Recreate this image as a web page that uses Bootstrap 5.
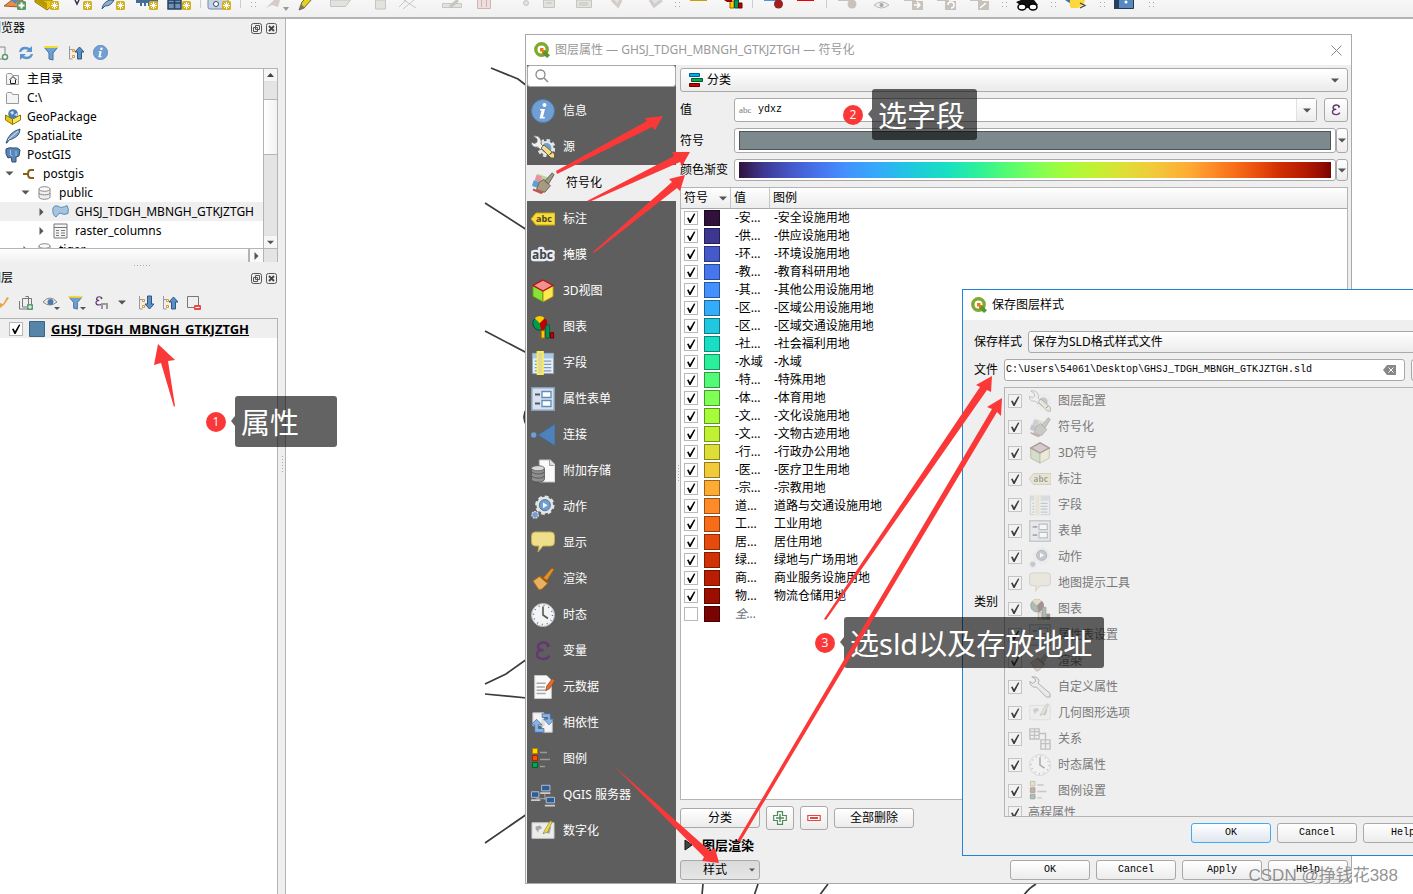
<!DOCTYPE html>
<html lang="zh-CN">
<head>
<meta charset="utf-8">
<meta name="viewport" content="width=device-width, initial-scale=1">
<title>QGIS</title>
<link href="https://cdn.jsdelivr.net/npm/bootstrap@5.3.0/dist/css/bootstrap.min.css" rel="stylesheet">
<script src="https://cdn.jsdelivr.net/npm/bootstrap@5.3.0/dist/js/bootstrap.bundle.min.js"></script>
<style>
  :root { --ui: #efefef; --edge: #a9a9a9; --red: #fb3838; --face: linear-gradient(#fff, #ececec); }
  body { font: 12px/18px "Noto Sans", "Noto Sans CJK SC", sans-serif; color: #000; background: #fff; }
  .mono { font: 10px/18px "Liberation Mono", "Noto Sans CJK SC", monospace; }
  svg { display: block; flex: none; }
  button, input, select { font: inherit; color: inherit; }

  /* application frame */
  .toolstrip { height: 19px; background: linear-gradient(#f7f7f7, #efefef); border-bottom: 2px solid #b4b4b4; }
  .dock { width: 286px; background: var(--ui); border-right: 1px solid #b4b4b4; }
  .dock-title { height: 18px; padding-right: 8px; }
  .dock-title span { margin-left: -11px; }
  .dock-tools { height: 31px; }
  .tool { border: 0; background: none; padding: 0; }
  .browser { height: 194px; margin-right: 7px; border: 1px solid #b4b4b4; border-left: 0; background: #fff; }
  .tree { list-style: none; margin: 0; padding: 0; height: 179px; }
  .tree li { height: 19px; display: flex; align-items: center; white-space: nowrap; padding-left: 5px; gap: 6px; }
  .tree .lv1 { padding-left: 5px; }
  .tree .lv2 { padding-left: 21px; }
  .tree .lv3 { padding-left: 37px; }
  .vbar { width: 14px; flex: none; border-left: 1px solid #b4b4b4; background: #e4e4e4; }
  .bar-btn { height: 13px; background: #f6f6f6; border: 0 solid #b4b4b4; }
  .vthumb { height: 56px; margin-top: 17px; background: linear-gradient(90deg, #fff, #f2f2f2); border: solid #b4b4b4; border-width: 1px 0; }
  .hbar { height: 14px; border-top: 1px solid #b4b4b4; }
  .hthumb { background: linear-gradient(#fff, #f0f0f0); border-right: 1px solid #b4b4b4; }
  .grip { height: 7px; color: #aaa; }
  .layers { margin-right: 7px; background: #fff; border: 1px solid #b4b4b4; border-left: 0; border-bottom: 0; }
  .layer-row { height: 19px; background: var(--ui); padding-left: 9px; }
  .layer-row a { color: #000; font-size: 13px; font-weight: 700; text-decoration: underline; text-underline-offset: 1px; margin-left: 6px; }

  /* check boxes */
  .tick { appearance: none; flex: none; width: 14px; height: 14px; margin: 0; background: #fff center/12px no-repeat; border: 1px solid #b8b8b8; }
  .tick:checked { background-image: url("data:image/svg+xml,%3Csvg xmlns='http://www.w3.org/2000/svg' viewBox='0 0 12 12'%3E%3Cpath d='M2 6 3.6 5.4 5 8.2 9 1.6 10.4 1.8 5.6 11H4.4z'/%3E%3C/svg%3E"); }

  /* windows */
  .win { position: absolute; background: var(--ui); display: flex; flex-direction: column; }
  .win-props { left: 525px; top: 34px; width: 827px; height: 850px; border: 1px solid var(--edge); }
  .win-save { left: 962px; top: 289px; width: 492px; height: 567px; border: 1px solid #1e86d8; }
  .win-bar { height: 30px; background: #fff; padding: 0 8px; gap: 5px; flex: none; }
  .face { background: var(--face); border: 1px solid var(--edge); border-radius: 3px; padding: 0; height: 20px; width: 80px; line-height: 18px; text-align: center; }
  .face.sq { width: 28px; height: 24px; }
  .face.go { border-color: #3fa9f5; background: linear-gradient(#fff, #dfe6ee); }
  .pull { appearance: none; background: var(--face); border: 1px solid var(--edge); border-radius: 3px; min-width: 0; outline: 0; }
  .field { background: #fff; border: 1px solid var(--edge); border-radius: 3px; min-width: 0; }
  .field input { border: 0; outline: 0; background: none; padding: 0; min-width: 0; }
  .side { width: 149px; background: #5e5e5e; color: #fff; margin-left: 1px; }
  .side .field { height: 22px; margin-bottom: 6px; padding-left: 6px; }
  .side a { height: 36px; display: flex; align-items: center; gap: 8px; padding-left: 4px; color: #fff; text-decoration: none; }
  .side a.on { background: var(--ui); color: #000; gap: 11px; }
  .side a, .kinds label { line-height: 20px; }
  .split { width: 4px; color: #aaa; }
  .pane { gap: 6px; padding: 3px 3px 3px 0; min-width: 0; }
  .lab { width: 54px; flex: none; }
  .h-combo { height: 24px; } .h-symbol { height: 25px; } .h-ramp { height: 22px; }
  .swatchbox { padding: 2px 4px; }
  .symbol { background: #7d8a8d; border: 1px solid #4c5558; }
  .ramp { background: linear-gradient(90deg, #30123b, #3e378f 4%, #4559cb 9%, #4777ef 14%, #4391fe 18%, #33adf9 24%, #1fc8de 29%, #18dfc3 35%, #2af09c 40%, #52fa75 45%, #7dff56 50%, #a4fc3b 55%, #c0f233 60%, #dedf36 65%, #f1ca3a 70%, #feab33 76%, #fe8b28 80%, #f66c19 84%, #e74b0c 88%, #d23105 91%, #b91e02 95%, #9b0f01 98%, #7a0403); }
  .classes { background: #fff; border: 1px solid #b4b4b4; min-height: 0; overflow: hidden; }
  .classes table { table-layout: fixed; width: 100%; border-collapse: separate; border-spacing: 0; }
  .classes th { height: 21px; padding: 0 3px; font-weight: 400; background: var(--face); border-bottom: 1px solid var(--edge); border-right: 1px solid #c4c4c4; }
  .classes th:last-child { border-right: 0; }
  .classes td { height: 18px; padding: 0 4px; line-height: 18px; white-space: nowrap; overflow: hidden; }
  .classes td:first-child { padding-left: 3px; }
  .chip { width: 16px; height: 16px; border: 1px solid #0006; }
  .kinds { border: 1px solid #b4b4b4; border-right: 0; height: 430px; overflow: hidden; color: #787878; }
  .kinds label { height: 26px; display: flex; align-items: center; padding-left: 3px; gap: 7px; }
  .kinds label.bare { height: 18px; gap: 6px; }
  .kinds .tick { background-color: #f4f4f4; opacity: .75; }
  .kinds svg { filter: grayscale(.75); opacity: .45; }

  /* annotations lying over the windows */
  .over { position: absolute; left: 0; top: 0; pointer-events: none; overflow: visible; }
  .note { position: absolute; display: flex; align-items: center; height: 51px; gap: 9px; white-space: nowrap; }
  .note b { width: 20px; height: 20px; border-radius: 50%; background: var(--red); color: #fff; font: 12px/20px "Open Sans", sans-serif; text-align: center; }
  .note span { position: relative; height: 51px; padding: 0 12px 0 6px; border-radius: 3px; background: #0000009c; color: #fff; font: 29px/54px "Noto Sans", "Noto Sans CJK SC", sans-serif; }
  .note span::before { content: ""; position: absolute; right: 100%; top: 20px; border: solid transparent; border-width: 5px 4px 5px 0; border-right-color: #0000009c; }
  .n1 { left: 206px; top: 396px; } .n1 span { padding-right: 38px; }
  .n2 { left: 843px; top: 89px; }
  .n3 { left: 815px; top: 617px; }
  .mark-csdn { position: absolute; right: 15px; bottom: 6px; font: 17px/24px "Liberation Sans", "Noto Sans CJK SC", sans-serif; color: #777c; text-shadow: 1px 1px #fff8; }
</style>
</head>
<body class="vh-100 overflow-hidden position-relative d-flex flex-column">

<svg width="0" height="0" class="position-absolute" aria-hidden="true">
  <symbol id="q" viewBox="0 0 16 16"><circle cx="7.500" cy="7.500" r="5.700" fill="none" stroke="#7cab2c" stroke-width="3.400"/><path d="M8 8l3 0 5 5.500-3 2.500-5-5z" fill="#589632"/><path d="M6 6h4l-1 1 2 2-2 2-2-2-1 1z" fill="#ee7913"/></symbol>
  <symbol id="caret" viewBox="0 0 8 5"><path d="M0 .5h8L4 4.500z" fill="#555"/></symbol>
  <symbol id="rt" viewBox="0 0 5 8"><path d="M.5 0v8L4.500 4z" fill="#555"/></symbol>
  <symbol id="info" viewBox="0 0 24 24"><circle cx="12" cy="12" r="11.500" fill="#6f9fd3" stroke="#4b7db5"/><circle cx="13.500" cy="6" r="2" fill="#fff"/><path d="M9 10h5l-2 8h2l-.5 1.500H8.500l2-8H9z" fill="#fff"/></symbol>
  <symbol id="source" viewBox="0 0 24 24"><circle cx="15.500" cy="13" r="7.800" fill="none" stroke="#e4e4e4" stroke-width="2.600" stroke-dasharray="3.500 2.600"/><circle cx="15.500" cy="13" r="6" fill="#6f9fd3" stroke="#e8e8e8" stroke-width="2.200"/><path d="M2 1q5-1 7 2t1 6l3 3-3 3-3.500-3Q2 13 .5 9V7l3 1.500L6 7V4z" fill="#f0f0f0" stroke="#666" stroke-width=".8"/><path d="M10 13l3-3 10.500 9v4h-3.500z" fill="#f3dc8a" stroke="#6b5a2a" stroke-width=".9"/><path d="M18.500 19.500l2.500-2" stroke="#222"/></symbol>
  <symbol id="style" viewBox="0 0 26 24"><path d="M7 2l12 4-4 14-13-4z" fill="#b7d7a0"/><path d="M6 3l6 2-2 6-6-2z" fill="#ef8fa0"/><path d="M3 9l6 2-2 6-6-2z" fill="#5aa0dc"/><path d="M9 11l5-3 7 7-6 7-9-3z" fill="#a89a80" stroke="#6c6455"/><path d="M15 10L23 1l2 2-6 10z" fill="#9c9a80" stroke="#5c5c50"/><path d="M2 18l12 4-3 2-9-4z" fill="#c84c4c"/></symbol>
  <symbol id="label" viewBox="0 0 24 24"><path d="M0 12l5-6h19v12H5z" fill="#f8dc3c" stroke="#c9a800"/><text x="5" y="15" font-family="Open Sans" font-weight="700" font-size="9" fill="#4a4220">abc</text></symbol>
  <symbol id="mask" viewBox="0 0 26 24"><text x="1" y="16" font-family="Open Sans" font-weight="700" font-size="13" fill="#444" stroke="#e8eef8" stroke-width="5" stroke-linejoin="round" paint-order="stroke">abc</text></symbol>
  <symbol id="cube" viewBox="0 0 24 26"><path d="M12 1L1 7v12l11 6z" fill="#8ae234" stroke="#4e8a10"/><path d="M12 1l11 6v12l-11 6z" fill="#fce94f" stroke="#a88a10"/><path d="M12 1L1 7l11 6 11-6z" fill="#f49090" stroke="#b01818" stroke-width="1.500"/></symbol>
  <symbol id="chart" viewBox="0 0 24 26"><circle cx="8.500" cy="9" r="7.500" fill="#009c4c" stroke="#044"/><path d="M8.500 9L3 3.500a7.500 7.500 0 0 1 11 0z" fill="#ffc800"/><path d="M8.500 9L14 3.500a7.500 7.500 0 0 1-4 13z" fill="#c00000"/><path d="M10 17h4v8h-4z" fill="#ffc800" stroke="#a06000"/><path d="M15 11h4v14h-4z" fill="#009c4c" stroke="#055"/><path d="M20 19h3.500v6H20z" fill="#c00000" stroke="#600"/></symbol>
  <symbol id="fields" viewBox="0 0 24 26"><path d="M.5 2.500h23v22H.5z" fill="#e8eef4" stroke="#88a0bc"/><path d="M1 3h22v5H1z" fill="#a8c8e8"/><path d="M3 11h18M3 14.500h18M3 18h18M3 21.500h18" stroke="#7a9cc0" stroke-width="1.500"/><path d="M6 1h6v24H6z" fill="#e0d8a0" stroke="#fcf050" stroke-width="1.800"/></symbol>
  <symbol id="form" viewBox="0 0 24 24"><path d="M.8.8h22.400v22.400H.8z" fill="#d8e2ee" stroke="#88a0bc" stroke-width="1.500"/><path d="M4 7.500h5M4 16.500h5" stroke="#556" stroke-width="2"/><path d="M11 4.500h9v6h-9zM11 13.500h9v6h-9z" fill="#fff" stroke="#5a8cc0" stroke-width="1.300"/></symbol>
  <symbol id="join" viewBox="0 0 24 24"><circle cx="2.700" cy="12" r="2.700" fill="#6f9fd3"/><path d="M24 1v22L7 12z" fill="#4f82ba" stroke="#38689c" stroke-width=".7"/></symbol>
  <symbol id="aux" viewBox="0 0 26 26"><path d="M9 1h12l5 5v19H9z" fill="#fafafa" stroke="#bbb"/><path d="M20 1v6h5" fill="#ddd" stroke="#999"/><path d="M.5 10v12c0 4 14 4 14 0V10z" fill="#909090" stroke="#555"/><path d="M1 14c2 3 12 3 13 0M1 18.500c2 3 12 3 13 0" fill="none" stroke="#555"/><ellipse cx="7.500" cy="10" rx="7" ry="2.800" fill="#d8d8d8" stroke="#666"/></symbol>
  <symbol id="action" viewBox="0 0 26 26"><circle cx="15" cy="11" r="9" fill="#e4e4e4" stroke="#e4e4e4" stroke-width="3" stroke-dasharray="4 3"/><circle cx="15" cy="11" r="6" fill="#6f9fd3" stroke="#476f9c"/><path d="M13 8v6l5-3z" fill="#fff"/><circle cx="4.500" cy="21.500" r="3.500" fill="#6f9fd3" stroke="#d8d8d8" stroke-width="1.500" stroke-dasharray="2 1"/></symbol>
  <symbol id="tip" viewBox="0 0 24 24"><path d="M4 1h16q3.500 0 3.500 4v6q0 4-3.500 4h-8l-5 6 1-6H4Q.5 15 .5 11V5Q.5 1 4 1z" fill="#efdf8c" stroke="#c0ac50"/></symbol>
  <symbol id="brush" viewBox="0 0 24 24"><path d="M12 11l9-10 2 1.500-7 11z" fill="#e0902c" stroke="#a05c10" stroke-width=".8"/><path d="M2 14l7-5 8 7-6 6-3 1z" fill="#e8b060" stroke="#a86c18"/><path d="M9 9l8 7" stroke="#a05c10" stroke-width="2"/></symbol>
  <symbol id="clock" viewBox="0 0 24 24"><circle cx="12" cy="12" r="11.500" fill="#f4f4f4" stroke="#b8b8b8"/><circle cx="12" cy="12" r="9.500" fill="none" stroke="#5078a8" stroke-width="1.500" stroke-dasharray="1 4"/><path d="M12 3.500V12l5 3.500" fill="none" stroke="#555" stroke-width="1.600"/></symbol>
  <symbol id="eps" viewBox="0 0 24 24"><path d="M17.500 7Q17 3.500 12.500 3.500T7 7.500q0 3.500 5.500 3.500-6.500 0-6.500 4.500t6.500 4.500q4.500 0 6-3.500" fill="none" stroke="#64386e" stroke-width="2.400"/><circle cx="17" cy="6.500" r="1.800" fill="#64386e"/></symbol>
  <symbol id="meta" viewBox="0 0 26 26"><path d="M4 .5h13l5 5v20H4z" fill="#fafafa" stroke="#ccc"/><path d="M6 9h10M6 13h9M6 16.500h10M6 20h10" stroke="#aaa" stroke-width="1.500"/><path d="M16 17l1-5 6-8 3 2-6 9z" fill="#e06c30" stroke="#8a3c10" stroke-width=".7"/></symbol>
  <symbol id="deps" viewBox="0 0 26 24"><path d="M2 1h12v14H2zM12 8h11v14H12z" fill="#f4f4f4" stroke="#c8c8c8"/><path d="M12 2h9v6h4l-5.500 6-5.500-6h4V6h-6z" fill="#8ab4e8" stroke="#38689c" stroke-width=".8"/><path d="M14 22H4v-8H0l6-6 6 6H8v4h6z" fill="#8ab4e8" stroke="#38689c" stroke-width=".8"/></symbol>
  <symbol id="legend" viewBox="0 0 24 24"><path d="M1.500 1.500h5v5h-5z" fill="#ffd800" stroke="#b88000"/><path d="M1.500 8.500h5v5h-5z" fill="#f85000" stroke="#a02800"/><path d="M1.500 15.500h5v5h-5z" fill="#00a850" stroke="#045c2c"/><path d="M9 5.500h7M9 12.500h10M9 19.500h5" stroke="#999" stroke-width="1.500"/></symbol>
  <symbol id="server" viewBox="0 0 26 26"><path d="M15 11v7M5 17h14" stroke="#aaa"/><g fill="#2c5c9c" stroke="#b8c4d0"><path d="M11.500 2.500h9v6h-9zM.5 9.500h8v6h-8zM16.500 15.500h9v6h-9z"/></g><path d="M10 11h11M0 18.500h10M15 24.500h11" stroke="#ccc" stroke-width="2"/></symbol>
  <symbol id="digit" viewBox="0 0 26 24"><path d="M1 3h24v17H1z" fill="#ececec" stroke="#c4c4c4"/><path d="M5 7l5-1 2 3-4 2 0 3-3-4zM16 10l6-3-2 8-4-1z" fill="#a8a8a8"/><path d="M13 15l2-4 6-10 2 1-5 11z" fill="#f0dc50" stroke="#8c7c20" stroke-width=".7"/></symbol>
  <symbol id="wrench" viewBox="0 0 24 24"><path d="M3 1q5-1 7 2t0 5l13 11v4h-4L8 12Q3 13 1 8V6l3 2 3-2V3z" fill="#e4e4e4" stroke="#555"/></symbol>
  <symbol id="rel" viewBox="0 0 24 24"><path d="M1 1h10v11H1zM13 13h10v10H13zM11 6h7v7M1 4h10M1 8h10M6 1v11M13 17h10M18 13v10" fill="none" stroke="#888" stroke-width="1.500"/></symbol>
  <symbol id="feather" viewBox="0 0 16 16"><path d="M1 15Q4 4 15 1q0 7-8 10l-3 1-2 3z" fill="#7ba2c8" stroke="#2c4c6c" stroke-width=".9"/><path d="M3 12L13 3" stroke="#dce8f4"/></symbol>
  <symbol id="db" viewBox="0 0 12 14"><path d="M.5 3v8c0 3 11 3 11 0V3" fill="#eee" stroke="#888"/><path d="M.5 7c0 2.500 11 2.500 11 0" fill="none" stroke="#888"/><ellipse cx="6" cy="3" rx="5.500" ry="2.300" fill="#fafafa" stroke="#888"/></symbol>
  <symbol id="funnel" viewBox="0 0 16 16"><path d="M1 2h14L10 8v7l-4-1V8z" fill="#6f9fd3" stroke="#476f9c"/><path d="M1 1h14v2H1z" fill="#f4dc30"/></symbol>
  <symbol id="up" viewBox="0 0 16 16"><path d="M1.500 1v13h3M1.500 4.500h3" fill="none" stroke="#999"/><path d="M4.500 4.500h2v2h-2zM4.500 10.500h2v2h-2z" fill="#fff" stroke="#e89020"/><path d="M9.500 14V7H7l4.500-5L16 7h-2.500v7z" fill="#5b8fc8" stroke="#2c5884"/></symbol>
  <symbol id="down" viewBox="0 0 16 16"><path d="M1.500 1v13h3M1.500 4.500h3" fill="none" stroke="#999"/><path d="M4.500 4.500h2v2h-2zM4.500 10.500h2v2h-2z" fill="#fff" stroke="#e89020"/><path d="M9.500 1v8H7l4.500 5L16 9h-2.500V1z" fill="#5b8fc8" stroke="#2c5884"/></symbol>
  <symbol id="float" viewBox="0 0 11 11"><rect x=".5" y=".5" width="10" height="10" rx="2" fill="none" stroke="#555"/><path d="M4.500 2.500h4v4h-4zM2.500 4.500h4v4h-4z" fill="none" stroke="#555"/></symbol>
  <symbol id="shut" viewBox="0 0 11 11"><rect x=".5" y=".5" width="10" height="10" rx="2" fill="none" stroke="#555"/><path d="M3 3l5 5M8 3L3 8" stroke="#444" stroke-width="1.800"/></symbol>
  <symbol id="star" viewBox="0 0 9 9"><rect width="9" height="9" rx="1.500" fill="#d4b020"/><path d="M4.500 1v7M1 4.500h7M2 2l5 5M7 2L2 7" stroke="#fff"/></symbol>
</svg>

<header class="toolstrip overflow-hidden flex-shrink-0">
  <svg width="1160" height="17" aria-hidden="true">
    <path d="M4 6l8-6h11l-3 7z" fill="#e89040" stroke="#a85820"/><path d="M10 0h8l-2 4z" fill="#5888c0"/><rect x="17" y="1" width="9" height="9" rx="1.500" fill="#5a9a6a"/><path d="M21.500 2.500v6M18.500 5.500h6" stroke="#fff" stroke-width="2"/>
    <path d="M35 2l12 8 5-4V0H35z" fill="#e8c810" stroke="#8c7400"/><path d="M35 1l12 8V3l-5-3z" fill="#b89800"/><use href="#star" x="50" y="1" width="9" height="9"/>
    <path d="M75 0l2 4 2-4" fill="#fff" stroke="#334" stroke-width="1.500"/><use href="#star" x="83" y="1" width="9" height="9"/>
    <path d="M102 9q1-7 8-9h4q-3 6-9 6z" fill="#8cb0d4" stroke="#38587c"/><use href="#star" x="116" y="1" width="9" height="9"/>
    <path d="M137 0h20v2h-20zM141 2v4m4-4v4m4-4v4" fill="#5b8fc8" stroke="#446c98" stroke-width="2"/><use href="#star" x="149" y="1" width="9" height="9"/>
    <path d="M168 0h13v9h-13zM174.500 0v9M168 3h13" fill="#6f93b8" stroke="#28405c" stroke-width="1.500"/><use href="#star" x="182" y="1" width="9" height="9"/>
    <path d="M200.500 0v8M240.500 0v8M752.500 0v8M826.500 0v8" stroke="#ccc"/>
    <path d="M208 0v7q0 2 2 2h18V0" fill="#c4d4e4" stroke="#6c8cac"/><circle cx="216" cy="4" r="2.500" fill="#fff" stroke="#446"/><use href="#star" x="222" y="1" width="9" height="9"/>
    <path d="M266 8l8-8h6l-2 7-6-2z" fill="#d4ccc8"/><path d="M283 7h6l-3 4z" fill="#999"/>
    <path d="M299 10l3-8 3-3h7l-8 9z" fill="#e8d020" stroke="#77692a"/><path d="M299 10l2-6 4 4z" fill="#777"/>
    <g fill="#e2e2de" stroke="#c6c6c0"><path d="M330.500 0v6.500h15l5-6.500zM375.500 0v9h10V0zM399 7l7-7M403 9l11-9M404 0l12 8M442.500 3.500h19v4h-19zM543.500 0v7.500h11V0zM576.500 0v7.500h15V0zM579 3h9M579 5h9M546 3h6"/><path d="M450 7l8-7" stroke-width="3"/><path d="M477.500 0v8.500h13V0M481.500 0v7m5-7v7" fill="#eedede" stroke="#d0b4b4"/><circle cx="526" cy="3" r="2.500"/><path d="M612 0l6 6 3-6M650 0l4 6 8-6" stroke="#d4ccc8" stroke-width="3"/></g>
    <path d="M690 0h17v1h-17z" fill="#c8a000"/><path d="M730 1h4v7h-4z" fill="#ffc800" stroke="#a06000"/><path d="M734.500 0h4v8h-4z" fill="#009c4c" stroke="#055"/><path d="M738.500 3h3.500v5h-3.500z" fill="#c00000" stroke="#600"/><path d="M724 0h8v2h-5z" fill="#900"/>
    <path d="M764 0h12v1h-12z" fill="#4c94f0"/><circle cx="778.500" cy="4" r="4.500" fill="#9c2020"/><path d="M797 0h17v1h-17z" fill="#f00000"/>
    <g fill="#c8c2bc"><path d="M838 0h12v1h-12zM904 0h12v1h-12zM937 0h12v1h-12zM970 0h12v1h-12z"/><circle cx="852" cy="4" r="4.500"/><rect x="912" y="1" width="11" height="9"/><rect x="945" y="1" width="11" height="9"/><rect x="978" y="1" width="11" height="9"/></g>
    <path d="M874 5q8-6 15 0-8 6-15 0z" fill="#eee" stroke="#bbb"/><circle cx="881.500" cy="5" r="2" fill="#aaa"/><path d="M914 5h6m-3-3 3 3-3 3M948 5a3 3 0 1 1 3 3M980 8l6-5" fill="none" stroke="#fff" stroke-width="1.500"/>
    <path d="M1016 2l5-2h13l4 5-6 3h-8z" fill="#111"/><ellipse cx="1022" cy="7" rx="4" ry="3" fill="#fff" stroke="#000" stroke-width="1.500"/><ellipse cx="1033" cy="7" rx="4" ry="3" fill="#fff" stroke="#000" stroke-width="1.500"/>
    <path d="M1065 0h6v4z" fill="#3c74a8"/><path d="M1070 0h15l-1 4-6 4h-7q-2-2-1-8z" fill="#fcd83c"/><path d="M1080 3l5 2.500-5 2.500" fill="none" stroke="#444" stroke-width="1.300"/>
    <path d="M1114.500 0v8.500h19V0" fill="#5888c0" stroke="#203850"/><path d="M1114 0h5v9h-5z" fill="#24405c"/><circle cx="1126" cy="2" r="1.500" fill="#fff"/>
    <path d="M251 2.500h6M251 6.500h6M675 2.500h6M675 6.500h6M1002 2.500h6M1002 6.500h6M1051 2.500h6M1051 6.500h6M1100 2.500h6M1100 6.500h6M1149 2.500h6M1149 6.500h6" fill="none" stroke="#aaa" stroke-dasharray="1 3"/>
  </svg>
</header>

<main class="d-flex flex-grow-1 overflow-hidden">
  <aside class="dock d-flex flex-column flex-shrink-0 overflow-hidden">
    <div class="dock-title d-flex align-items-center gap-1"><span class="me-auto">浏览器</span>
      <button class="tool" aria-label="浮动"><svg width="11" height="11"><use href="#float"/></svg></button><button class="tool" aria-label="关闭"><svg width="11" height="11"><use href="#shut"/></svg></button></div>
    <div class="dock-tools d-flex align-items-center gap-2">
      <svg width="9" height="16"><path d="M0 2h5v12H0" fill="none" stroke="#888"/><circle cx="5" cy="12" r="2.500" fill="#fff" stroke="#5a9a6a" stroke-width="1.500"/></svg>
      <svg width="18" height="16" viewBox="0 0 16 16"><path d="M1 7q1-6 8-5l3 1 2-2v6H8l2-2q-5-2-7 2zM15 9q-1 6-8 5l-3-1-2 2V9h6l-2 2q5 2 7-2z" fill="#5b93d0"/></svg>
      <svg width="16" height="16"><use href="#funnel"/></svg>
      <svg width="18" height="16"><use href="#up"/></svg>
      <svg width="15" height="15"><use href="#info"/></svg>
    </div>
    <div class="browser">
      <div class="d-flex">
        <ul class="tree flex-grow-1 overflow-hidden">
          <li><svg width="16" height="14"><path d="M1.500 12.500v-10l1-1h4l1 2h6v9z" fill="#f4f4f4" stroke="#999"/><path d="M4.500 8L8 4.500 11.500 8M5.500 8v3.500h5V8" fill="none" stroke="#222"/></svg>主目录</li>
          <li><svg width="16" height="14"><path d="M1.500 12.500v-10l1-1h4l1 2h6v9z" fill="#f4f4f4" stroke="#999"/></svg>C:\</li>
          <li><svg width="16" height="16"><path d="M.5 6l7 4v5.500L.5 11z" fill="#e8c810" stroke="#8c7400"/><path d="M15.500 6l-8 4v5.500l8-4.500z" fill="#fce850" stroke="#8c7400"/><circle cx="8" cy="5" r="4.800" fill="#4c7cac"/><path d="M5 3l3-1 1 2-2 2zM9 6l3-2v3z" fill="#cfe0f0"/></svg>GeoPackage</li>
          <li><svg width="16" height="16"><use href="#feather"/></svg>SpatiaLite</li>
          <li><svg width="16" height="16"><path d="M1 2q3-2 7-1 5-1 7 2l-1 6-3 1v5H7l-1-5-3 1Q0 7 1 2z" fill="#5b87b8" stroke="#2c4c74"/><path d="M5.500 3v5l2 1M11 4v5" stroke="#a8c4e0" fill="none"/></svg>PostGIS</li>
          <li class="lv1 gap-2"><svg width="9" height="5"><use href="#caret"/></svg><svg width="13" height="10"><path d="M1 5h5M12 1H9Q6 1 6 5t3 4h3" fill="none" stroke="#8c5c10" stroke-width="2"/></svg>postgis</li>
          <li class="lv2 gap-2"><svg width="9" height="5"><use href="#caret"/></svg><svg width="13" height="14"><use href="#db"/></svg>public</li>
          <li class="lv3" style="background:#efefef"><svg width="9" height="8"><use href="#rt"/></svg><svg width="17" height="13"><path d="M1 3q1-3 5-2 3 3 9-.5 2 3 1 8-4 2-8-.5-2 1-4 4Q0 10 1 3z" fill="#a4c4e0" stroke="#5c8cb8"/></svg>GHSJ_TDGH_MBNGH_GTKJZTGH</li>
          <li class="lv3"><svg width="9" height="8"><use href="#rt"/></svg><svg width="17" height="16"><path d="M2 1h13v14H2z" fill="#f4f4f4" stroke="#777"/><path d="M2 4.500h13M4 7.500h3m2 0h4M4 10h3m2 0h4M4 12.500h3m2 0h4" stroke="#777"/></svg>raster_columns</li>
          <li class="lv2 gap-2"><svg width="9" height="8"><use href="#rt"/></svg><svg width="13" height="14"><use href="#db"/></svg>tiger</li>
        </ul>
        <div class="vbar d-flex flex-column"><div class="bar-btn border-bottom d-flex align-items-center justify-content-center"><svg width="7" height="4"><path d="M0 4h7L3.500 0z" fill="#444"/></svg></div><div class="vthumb"></div><div class="bar-btn border-top mt-auto d-flex align-items-center justify-content-center"><svg width="7" height="5"><use href="#caret"/></svg></div></div>
      </div>
      <div class="hbar d-flex"><div class="hthumb flex-grow-1"></div><div class="vbar d-flex align-items-center justify-content-center bg-light"><svg width="5" height="8"><use href="#rt"/></svg></div><div class="vbar"></div></div>
    </div>
    <div class="grip d-flex justify-content-center align-items-center"><svg width="18" height="1"><path d="M0 .5h18" stroke="#aaa" stroke-dasharray="1 2"/></svg></div>
    <div class="dock-title d-flex align-items-center gap-1"><span class="me-auto">图层</span>
      <button class="tool" aria-label="浮动"><svg width="11" height="11"><use href="#float"/></svg></button><button class="tool" aria-label="关闭"><svg width="11" height="11"><use href="#shut"/></svg></button></div>
    <div class="dock-tools d-flex align-items-center gap-2">
      <svg width="10" height="16"><path d="M0 8l3 1 4-7 2 1-5 7-4 3z" fill="#e8a840"/></svg>
      <svg width="17" height="16"><path d="M1.500 6v8h9M4.500 3.500V12h9V3.500zM7.500 1.500h3v8" fill="none" stroke="#777"/><rect x="9" y="9" width="6" height="6" rx="1" fill="#5a9a6a"/><path d="M12 10v4m-2-2h4" stroke="#fff"/></svg>
      <svg width="17" height="16"><path d="M0 7q7-8 14 0-7 6-14 0z" fill="#eee" stroke="#888"/><circle cx="7.500" cy="7" r="3" fill="#4c7cac"/><path d="M11 12h6l-3 3z" fill="#555"/></svg>
      <svg width="18" height="16"><use href="#funnel" width="15" height="15"/><path d="M12 12h6l-3 3z" fill="#555"/></svg>
      <svg width="16" height="16"><use href="#eps" x="-1" y="0" width="12" height="12"/><path d="M8 14V9h5v5" fill="none" stroke="#999" stroke-width="2"/></svg>
      <svg class="me-1" width="8" height="5"><use href="#caret"/></svg>
      <svg width="16" height="16"><use href="#down"/></svg>
      <svg width="16" height="16"><use href="#up"/></svg>
      <svg width="16" height="16"><path d="M1.500 1.500h11v11h-11z" fill="none" stroke="#777"/><rect x="8" y="10" width="7" height="5" rx="1" fill="#e84848"/><path d="M9.500 12.500h4" stroke="#fff"/></svg>
    </div>
    <div class="layers flex-grow-1"><div class="layer-row d-flex align-items-center"><input class="tick" type="checkbox" checked aria-label="图层可见"><svg class="ms-1" width="18" height="16"><path d="M2.500.5h15v15h-15z" fill="#5585a8" stroke="#3c6484"/></svg><a href="#">GHSJ_TDGH_MBNGH_GTKJZTGH</a></div></div>
  </aside>
</main>

<!-- map linework under the windows -->
<svg class="over" width="1" height="1" aria-hidden="true"><g fill="none" stroke="#383c3c" stroke-width="1.700">
  <path d="M491 68l27 11 9 7M485 203l42 27M485 331l42 22M485 684l21-10 21-15M485 694l42 4M485 843l42-29M758 884l-4 12M828 884l-9 12M1036 884q-7 4-12 11M703 884l-1 11"/><path d="M527 408q-6 9 0 18" fill="#6f8080"/></g>
  <path d="M282.500 456v18" stroke="#aaa" stroke-dasharray="1 2"/></svg>

<section class="win win-props" aria-label="图层属性">
  <div class="win-bar d-flex align-items-center" style="color:#999"><svg width="16" height="16"><use href="#q"/></svg><span class="me-auto">图层属性 — GHSJ_TDGH_MBNGH_GTKJZTGH — 符号化</span><button class="tool" aria-label="关闭"><svg width="13" height="13"><path d="M1.500 1.500l10 10M11.500 1.500l-10 10" stroke="#888"/></svg></button></div>
  <div class="d-flex flex-grow-1">
    <nav class="side flex-shrink-0" id="side"><div class="field d-flex align-items-center"><svg width="16" height="16"><circle cx="6.500" cy="6.500" r="4.500" fill="none" stroke="#888" stroke-width="1.300"/><path d="M10 10l4 4" stroke="#888" stroke-width="1.500"/></svg><input class="w-100" type="search" aria-label="搜索"></div></nav>
    <div class="split d-flex align-items-center"><svg width="4" height="18"><path d="M2.500 0v18" stroke="#aaa" stroke-dasharray="1 2"/></svg></div>
    <div class="pane flex-grow-1 d-flex flex-column">
      <div class="pull h-combo d-flex align-items-center px-2"><svg width="14" height="16"><path d="M.5 1.500h10v3h-10z" fill="#00b0d0" stroke="#0454b0"/><path d="M2.500 6.500h11v3h-11z" fill="#00b058" stroke="#04542c"/><path d="M.5 11.500h10v3h-10z" fill="#c80000" stroke="#600"/></svg><select class="pull border-0 bg-transparent flex-grow-1 py-0 ps-1 pe-0" aria-label="渲染类型"><option>分类</option></select><svg width="8" height="5"><use href="#caret"/></svg></div>
      <div class="d-flex h-combo"><label class="lab align-self-center" for="val">值</label><div class="field flex-grow-1 d-flex align-items-center ps-1"><span style="font:9px/18px 'Liberation Serif',serif;color:#777;width:19px">abc</span><input id="val" class="mono flex-grow-1" value="ydxz"><span class="h-100 border-start d-flex align-items-center justify-content-center" style="width:20px;background:var(--face)"><svg width="8" height="5"><use href="#caret"/></svg></span></div><button class="face h-combo d-flex align-items-center justify-content-center" style="width:24px;margin-left:7px" aria-label="表达式"><svg width="14" height="14"><use href="#eps"/></svg></button></div>
      <div class="d-flex h-symbol"><span class="lab align-self-center">符号</span><button class="field swatchbox flex-grow-1" aria-label="符号"><span class="symbol d-block h-100"></span></button><button class="face h-100 d-flex align-items-center justify-content-center" style="width:12px" aria-label="符号菜单"><svg width="8" height="5"><use href="#caret"/></svg></button></div>
      <div class="d-flex h-ramp"><span class="lab align-self-center text-nowrap">颜色渐变</span><button class="field swatchbox flex-grow-1" aria-label="颜色渐变"><span class="ramp d-block h-100"></span></button><button class="face h-100 d-flex align-items-center justify-content-center" style="width:12px" aria-label="渐变菜单"><svg width="8" height="5"><use href="#caret"/></svg></button></div>
      <div class="classes flex-grow-1"><table><colgroup><col style="width:50px"><col style="width:39px"><col></colgroup><thead><tr><th><div class="d-flex align-items-center justify-content-between">符号<svg width="8" height="5"><use href="#caret"/></svg></div></th><th>值</th><th>图例</th></tr></thead><tbody id="classes"></tbody></table></div>
      <div class="d-flex align-items-center" style="gap:6px"><button class="face">分类</button><button class="face sq d-flex align-items-center justify-content-center" aria-label="添加"><svg width="14" height="14"><path d="M4.500.7h5v3.800h3.800v5H9.500v3.800h-5V9.500H.7v-5h3.800z" fill="#fff" stroke="#4c8c54" stroke-width="1.200"/><path d="M7 3v8M3 7h8" stroke="#4c8c54" stroke-width="1.400"/></svg></button><button class="face sq d-flex align-items-center justify-content-center" aria-label="移除"><svg width="14" height="14"><path d="M.8 4.500h12.400v5H.8z" fill="#fff" stroke="#e04848" stroke-width="1.200"/><path d="M3 7h8" stroke="#e04848" stroke-width="2"/></svg></button><button class="face">全部删除</button></div>
      <div class="d-flex align-items-center fw-bold ps-1" style="height:18px;gap:9px;font-size:13px"><svg width="9" height="12"><path d="M1 1v10l7-5z" fill="#444" stroke="#111"/></svg>图层渲染</div>
      <div class="d-flex" style="gap:6px"><button class="face me-auto d-flex align-items-center justify-content-end pe-1" style="gap:22px;background:linear-gradient(#dadada,#e6e6e6)">样式<svg width="6" height="4"><use href="#caret"/></svg></button><button class="face mono">OK</button><button class="face mono">Cancel</button><button class="face mono">Apply</button><button class="face mono">Help</button></div>
    </div>
  </div>
</section>

<div class="overflow-hidden position-absolute w-100 h-100 pe-none">
<section class="win win-save pe-auto" aria-label="保存图层样式">
  <div class="win-bar d-flex align-items-center"><svg width="16" height="16"><use href="#q"/></svg>保存图层样式</div>
  <div class="d-flex flex-column" style="padding:11px 10px 11px 11px;gap:6px">
    <div class="d-flex" style="height:22px"><label class="lab align-self-center" for="fmt">保存样式</label><select id="fmt" class="pull flex-grow-1 px-1"><option>保存为SLD格式样式文件</option></select></div>
    <div class="d-flex" style="height:22px"><label class="align-self-center" style="width:30px" for="file">文件</label><div class="field d-flex align-items-center flex-grow-1" style="padding-left:1px"><input id="file" class="mono flex-grow-1" value="C:\Users\54061\Desktop\GHSJ_TDGH_MBNGH_GTKJZTGH.sld"><svg width="13" height="10" class="me-2"><path d="M0 5l4-5h9v10H4z" fill="#888"/><path d="M5.500 2.500l5 5m0-5l-5 5" stroke="#fff"/></svg></div><button class="face h-100" style="width:32px;margin-left:6px">…</button></div>
    <div class="d-flex"><span class="align-self-center" style="width:30px">类别</span><div class="kinds flex-grow-1" id="kinds"></div></div>
    <div class="d-flex justify-content-end" style="gap:6px"><button class="face go mono">OK</button><button class="face mono">Cancel</button><button class="face mono">Help</button></div>
  </div>
</section>
</div>

<div class="note n1"><b>1</b><span>属性</span></div>
<div class="note n2"><b>2</b><span>选字段</span></div>
<div class="note n3"><b>3</b><span>选sld以及存放地址</span></div>
<svg class="over" width="1" height="1" aria-hidden="true"><g fill="#fb3838">
  <path d="M556 171L647 121 645 118 663 116 655 130 652 127 557 174z"/>
  <path d="M587 201L674 156 672 152 690 152 682 166 680 162 589 202z"/>
  <path d="M593 252L672 182 669 179 685 175 680 191 677 188 594 253z"/>
  <path d="M174 407L161 363 154 365 158 344 175 360 168 361 175 406z"/>
  <path d="M614 766L710 851 715 848 719 863 702 861 704 857z"/>
  <path d="M824 619L980 387 976 385 992 376 991 392 987 390 826 620z"/>
  <path d="M737 841L992 409 987 407 1002 398 1001 416 997 412 740 842z"/>
</g></svg>
<div class="mark-csdn">CSDN @挣钱花388</div>

<script>
  const icon = (id, s) => `<svg width="${s}" height="${s}"><use href="#${id}"/></svg>`;
  const pages = [['info','信息'],['source','源'],['style','符号化'],['label','标注'],['mask','掩膜'],['cube','3D视图'],['chart','图表'],['fields','字段'],['form','属性表单'],['join','连接'],['aux','附加存储'],['action','动作'],['tip','显示'],['brush','渲染'],['clock','时态'],['eps','变量'],['meta','元数据'],['deps','相依性'],['legend','图例'],['server','QGIS 服务器'],['digit','数字化']];
  document.getElementById('side').insertAdjacentHTML('beforeend', pages.map(([i, t]) =>
    `<a href="#"${i === 'style' ? ' class="on"' : ''}>${icon(i, 24)}${t}</a>`).join(''));

  const classes = [['#30123b','-安…','-安全设施用地'],['#3e378f','-供…','-供应设施用地'],['#4559cb','-环…','-环境设施用地'],['#4777ef','-教…','-教育科研用地'],['#4391fe','-其…','-其他公用设施用地'],['#33adf9','-区…','-区域公用设施用地'],['#1fc8de','-区…','-区域交通设施用地'],['#18dfc3','-社…','-社会福利用地'],['#2af09c','-水域','-水域'],['#52fa75','-特…','-特殊用地'],['#7dff56','-体…','-体育用地'],['#a4fc3b','-文…','-文化设施用地'],['#c0f233','-文…','-文物古迹用地'],['#dedf36','-行…','-行政办公用地'],['#f1ca3a','-医…','-医疗卫生用地'],['#feab33','-宗…','-宗教用地'],['#fe8b28','道…','道路与交通设施用地'],['#f66c19','工…','工业用地'],['#e74b0c','居…','居住用地'],['#d23105','绿…','绿地与广场用地'],['#b91e02','商…','商业服务设施用地'],['#9b0f01','物…','物流仓储用地'],['#7a0403','全…','']];
  document.getElementById('classes').innerHTML = classes.map(([c, v, t]) =>
    `<tr><td><div class="d-flex align-items-center" style="gap:6px"><input class="tick" type="checkbox" aria-label="${v}"${t ? ' checked' : ''}><span class="chip" style="background:${c}"></span></div></td><td${t ? '' : ' class="fst-italic text-secondary"'}>${v.replace('…', '...')}</td><td>${t}</td></tr>`).join('');

  const kinds = [['source','图层配置'],['style','符号化'],['cube','3D符号'],['label','标注'],['fields','字段'],['form','表单'],['action','动作'],['tip','地图提示工具'],['chart','图表'],['form','属性表设置'],['brush','渲染'],['wrench','自定义属性'],['digit','几何图形选项'],['rel','关系'],['clock','时态属性'],['legend','图例设置'],['','高程属性']];
  document.getElementById('kinds').innerHTML = kinds.map(([i, t]) =>
    `<label${i ? '' : ' class="bare"'}><input class="tick" type="checkbox" checked disabled>${i ? icon(i, 22) : ''}${t}</label>`).join('');
</script>
</body>
</html>
